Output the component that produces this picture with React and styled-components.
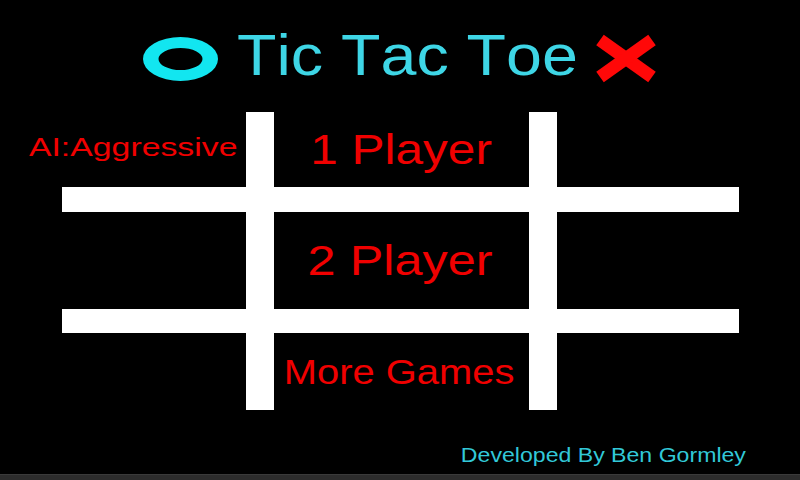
import React from 'react';
import styled, { createGlobalStyle } from 'styled-components';

const GlobalStyle = createGlobalStyle`
    html, body {
        margin: 0;
        padding: 0;
        background: #000;
    }
    body {
        font-family: "Liberation Sans", Arial, sans-serif;
    }
`;

const Screen = styled.div`
    width: 800px;
    height: 480px;
    background: #000;
    display: flex;
    flex-direction: column;
    overflow: hidden;
`;

const Header = styled.header`
    display: flex;
    justify-content: center;
    align-items: flex-start;
    padding-top: 27px;
    height: 57px;
`;

const Stretched = styled.span`
    display: inline-block;
    font-size: ${(p) => p.$size}px;
    line-height: 1;
    color: ${(p) => p.$color};
    white-space: nowrap;
    font-kerning: none;
    transform: scaleX(${(p) => p.$stretch});
    transform-origin: center;
`;

const TitleText = styled(Stretched)`
    margin: 0 37px 0 39px;
`;

const Ring = styled.svg`
    margin-top: 10px;
    display: block;
`;

const Cross = styled.svg`
    margin-top: 8px;
    display: block;
    overflow: visible;
`;

const Board = styled.div`
    margin: 28px 0 0 62px;
    width: 677px;
    display: grid;
    grid-template-columns: 184px 28px 255px 28px 182px;
    grid-template-rows: 75px 25px 97px 24px 77px;
`;

const VBar = styled.div`
    grid-column: ${(p) => p.$col};
    grid-row: 1 / -1;
    background: #fff;
`;

const HBar = styled.div`
    grid-row: ${(p) => p.$row};
    grid-column: 1 / -1;
    background: #fff;
`;

const Cell = styled.div`
    grid-column: ${(p) => p.$col};
    grid-row: ${(p) => p.$row};
    display: flex;
    align-items: center;
    justify-content: ${(p) => p.$justify || 'center'};
    cursor: pointer;
`;

const MenuText = styled(Stretched)`
    margin-right: ${(p) => p.$nudge || 0}px;
`;

const AiLabel = styled(Stretched)`
    margin: 0 33px 5px 0;
`;

const Footer = styled.footer`
    display: flex;
    justify-content: flex-end;
    padding-right: 73px;
    margin-top: 35px;
    flex: 1;
`;

const NavEdge = styled.div`
    height: 5px;
    background: #2c2c2c;
    border-top: 1px solid #3a3a3a;
`;

const RED = '#f00000';

const menu = [
    { row: 1, label: '1 Player', size: 42, stretch: 1.18, nudge: 0 },
    { row: 3, label: '2 Player', size: 42, stretch: 1.2, nudge: 2 },
    { row: 5, label: 'More Games', size: 35, stretch: 1.14, nudge: 5 },
];

const App = () => (
    <Screen>
        <GlobalStyle />
        <Header>
            <Ring width="75" height="44" viewBox="0 0 75 44">
                <path
                    fill="#12e6f0"
                    fillRule="evenodd"
                    d="M37.5 0A37.5 22 0 1 0 37.5 44A37.5 22 0 1 0 37.5 0ZM37.5 11A22 11 0 1 1 37.5 33A22 11 0 1 1 37.5 11Z"
                />
            </Ring>
            <TitleText $size={57} $stretch={1.133} $color="#3ed6e6">Tic Tac Toe</TitleText>
            <Cross width="62" height="47" viewBox="0 0 62 47">
                <g stroke="#ff0808" strokeWidth="13">
                    <line x1="5" y1="5" x2="57" y2="42" />
                    <line x1="57" y1="5" x2="5" y2="42" />
                </g>
            </Cross>
        </Header>

        <Board>
            <Cell $col={1} $row={1} $justify="flex-end">
                <AiLabel $size={26} $stretch={1.3} $color={RED}>AI:Aggressive</AiLabel>
            </Cell>
            {menu.map((item) => (
                <Cell key={item.label} $col={3} $row={item.row}>
                    <MenuText $size={item.size} $stretch={item.stretch} $nudge={item.nudge} $color={RED}>
                        {item.label}
                    </MenuText>
                </Cell>
            ))}
            <HBar $row={2} />
            <HBar $row={4} />
            <VBar $col={2} />
            <VBar $col={4} />
        </Board>

        <Footer>
            <Stretched $size={20} $stretch={1.155} $color="#32c8d8">Developed By Ben Gormley</Stretched>
        </Footer>
        <NavEdge />
    </Screen>
);

export default App;
